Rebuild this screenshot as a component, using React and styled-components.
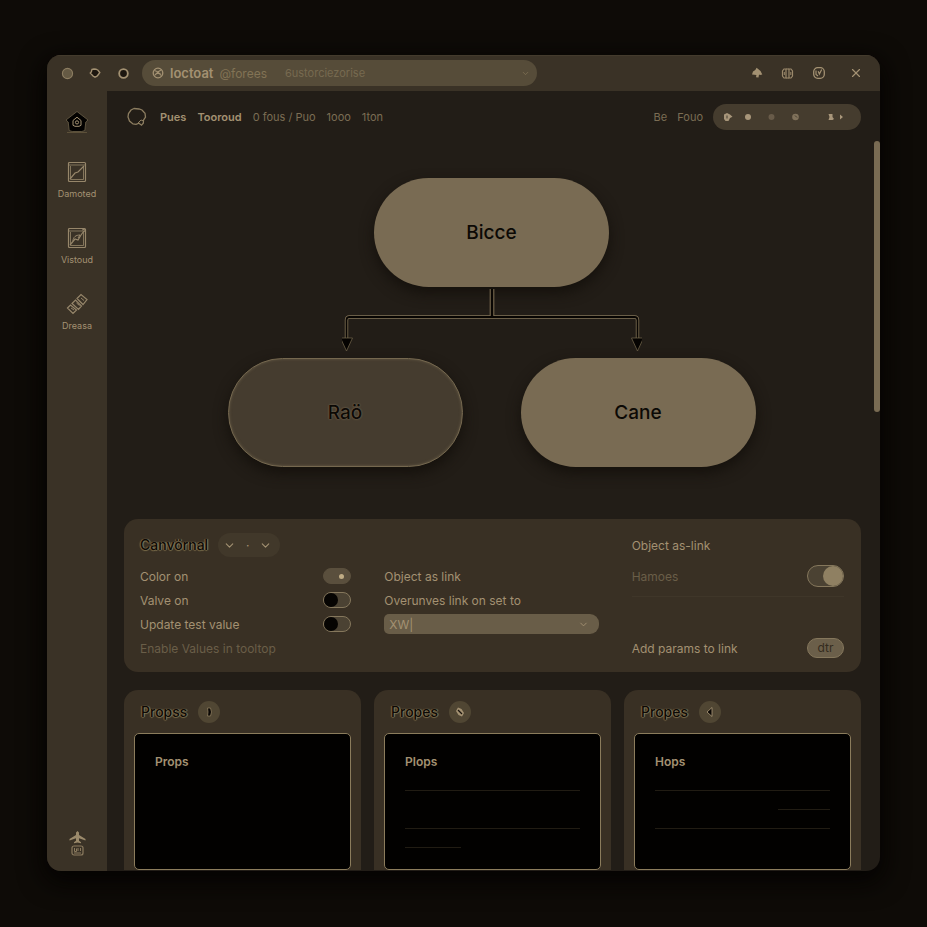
import { useState } from 'react'
import styled, { createGlobalStyle, css } from 'styled-components'
import { ChevronDown, X } from 'lucide-react'

const GlobalStyle = createGlobalStyle`
  * {
    box-sizing: border-box;
  }
  body {
    margin: 0;
    background: #0e0b07;
    color: #a39172;
    font-family: Inter, 'Liberation Sans', sans-serif;
    font-size: 12px;
  }
  button, input, select {
    font: inherit;
    color: inherit;
    margin: 0;
  }
  button {
    padding: 0;
    border: none;
    background: none;
  }
`

const Page = styled.div`
  display: flex;
  min-height: 100vh;
  padding: 55px 47px 56px;
`

const Window = styled.div`
  flex: 1;
  min-width: 0;
  display: flex;
  flex-direction: column;
  overflow: hidden;
  border-radius: 14px;
  background: #221d17;
  box-shadow: 0 8px 24px 4px #050302;
`

const TitleBar = styled.header`
  display: flex;
  align-items: center;
  height: 36px;
  padding: 0 9px 0 6px;
  background: #3a3226;
  box-shadow: inset 0 1px #443b2d;
`

const BarButton = styled.button`
  display: flex;
  align-items: center;
  justify-content: center;
  width: ${(props) => props.$width}px;
  height: 26px;
`

const AddressBar = styled.label`
  flex: 0 1 395px;
  display: flex;
  align-items: center;
  gap: 6px;
  height: 26px;
  margin-left: 5px;
  padding: 0 7px 0 10px;
  border-radius: 13px;
  background: #564c39;
`

const Site = styled.span`
  font-size: 13px;
  font-weight: 600;
  white-space: nowrap;
`

const SitePath = styled.span`
  color: #827355;
  font-size: 12px;
  white-space: nowrap;
`

const AddressInput = styled.input`
  flex: 1;
  min-width: 0;
  margin-left: 12px;
  padding: 0;
  border: none;
  outline: none;
  background: none;
  color: #766a50;
  font-size: 11px;
`

const BarActions = styled.div`
  display: flex;
  gap: 6px;
  margin-left: auto;
`

const ActionGroup = styled.div`
  display: flex;
`

const Body = styled.div`
  flex: 1;
  display: flex;
`

const Sidebar = styled.nav`
  flex: 0 0 60px;
  display: flex;
  flex-direction: column;
  align-items: center;
  gap: 27px;
  padding: 19px 0 15px;
  background: #3a3226;
`

const SideLink = styled.a`
  display: flex;
  flex-direction: column;
  align-items: center;
  gap: 5px;
  color: #a39172;
  font-size: 9px;
  line-height: 12px;
  text-decoration: none;
`

const SideFooter = styled.button`
  display: flex;
  flex-direction: column;
  align-items: center;
  margin-top: auto;
`

const Content = styled.main`
  flex: 1;
  min-width: 0;
  padding: 13px 13px 0 17px;
`

const ScrollTrack = styled.div`
  flex: 0 0 6px;
  padding-top: 50px;
`

const ScrollThumb = styled.div`
  height: 271px;
  border-radius: 3px;
  background: #796b53;
`

const TopNav = styled.nav`
  display: flex;
  align-items: center;
  gap: 10px;
  height: 26px;
  padding-left: 3px;
`

const NavLinks = styled.div`
  display: flex;
  gap: 11px;
  padding-left: 3px;
`

const NavLink = styled.a`
  color: ${(props) => (props.$strong ? '#a39172' : '#7b6d54')};
  font-size: 11px;
  font-weight: ${(props) => (props.$strong ? 600 : 400)};
  text-decoration: none;
  white-space: nowrap;
`

const NavEnd = styled.div`
  display: flex;
  align-items: center;
  gap: 10px;
  margin-left: auto;
`

const ToolPill = styled.button`
  width: 148px;
  height: 26px;
  border-radius: 13px;
  background: #453c2e;
`

const Diagram = styled.section`
  display: flex;
  flex-direction: column;
  align-items: center;
  margin: 48px 0 52px;
  padding-right: 2px;
`

const NodeRow = styled.div`
  display: flex;
  gap: 58px;
`

const Node = styled.button`
  width: 235px;
  height: 109px;
  border-radius: 55px;
  color: #0c0905;
  font-size: 19px;
  font-weight: 500;
  background: #796b53;
  box-shadow: 0 6px 14px #15110c;
  ${(props) =>
    props.$muted &&
    css`
      background: #453c2f;
      border: 1px solid #75684f;
      box-shadow: inset 0 0 3px #6b5f49, 0 6px 14px #15110c;
      text-shadow: 0 0 2px #8b7c60;
    `}
`

const Settings = styled.section`
  display: grid;
  grid-template-columns: 211fr 214fr 212fr;
  gap: 33px;
  padding: 14px 17px 13px 16px;
  border-radius: 14px;
  background: #393024;
`

const Column = styled.div`
  display: flex;
  flex-direction: column;
  min-width: 0;
`

const ColumnHead = styled.div`
  display: flex;
  align-items: center;
  gap: 10px;
  height: 24px;
  margin-bottom: 8px;
`

const Heading = styled.h2`
  margin: 0;
  color: #0d0905;
  font-size: 14px;
  font-weight: 500;
  line-height: 20px;
  text-shadow: 1px 0 1px #94845f, -1px 0 1px #766847, 0 1px 1px #766847;
`

const ChevronPill = styled.button`
  display: flex;
  align-items: center;
  justify-content: space-between;
  width: 62px;
  height: 24px;
  padding: 0 8px 0 5px;
  border-radius: 12px;
  background: #41382a;
`

const Rows = styled.div`
  display: grid;
  grid-auto-rows: 22px;
  row-gap: 2px;
`

const Row = styled.label`
  display: flex;
  align-items: center;
  justify-content: space-between;
  color: ${(props) => (props.$dim ? '#6a5e48' : '#a39172')};
  white-space: nowrap;
`

const LastRow = styled.div`
  display: flex;
  align-items: center;
  justify-content: space-between;
  height: 22px;
  margin-top: auto;
`

const Switch = styled.input`
  appearance: none;
  display: flex;
  align-items: center;
  width: ${(props) => (props.$large ? 37 : 28)}px;
  height: ${(props) => (props.$large ? 22 : 16)}px;
  border: 1px solid #85775c;
  border-radius: 11px;
  background: #4b4233;

  &::before {
    content: '';
    width: ${(props) => (props.$large ? 20 : 14)}px;
    height: ${(props) => (props.$large ? 20 : 14)}px;
    border-radius: 50%;
    background: #060402;
  }

  &:checked {
    justify-content: flex-end;
  }

  &:checked::before {
    background: #8f8062;
  }

  ${(props) =>
    props.$soft &&
    css`
      border-color: #5a4f3d;
      background: #5a4f3d;
      &:checked::before {
        width: 5px;
        height: 5px;
        margin-right: 6px;
        background: #c0ac85;
      }
    `}
`

const SelectBox = styled.div`
  display: grid;
  align-items: center;

  > * {
    grid-area: 1 / 1;
  }
  > svg {
    justify-self: end;
    margin-right: 10px;
    pointer-events: none;
  }
`

const Select = styled.select`
  appearance: none;
  width: 100%;
  height: 20px;
  padding: 0 5px;
  border: none;
  border-radius: 5px 9px 9px 5px;
  background: #695d48;
  color: #a39172;
`

const Tag = styled.button`
  width: 37px;
  height: 20px;
  border: 1px solid #85775c;
  border-radius: 10px;
  background: #6b5f4a;
  color: #342b1e;
  line-height: 16px;
`

const Divider = styled.hr`
  width: 100%;
  margin: 9px 0;
  border: none;
  border-top: 1px solid #3f3629;
`

const Cards = styled.section`
  display: grid;
  grid-template-columns: repeat(3, 1fr);
  gap: 13px;
  margin-top: 18px;
`

const Card = styled.article`
  padding: 11px 10px 0;
  border-radius: 14px 14px 0 0;
  background: #393024;
`

const CardHead = styled.div`
  display: flex;
  align-items: center;
  gap: 11px;
  height: 22px;
  margin-bottom: 10px;
  padding-left: 7px;
`

const RoundButton = styled.button`
  display: flex;
  align-items: center;
  justify-content: center;
  width: 22px;
  height: 22px;
  border-radius: 50%;
  background: #504633;
`

const Preview = styled.div`
  height: 137px;
  padding: 18px 20px;
  border: 1px solid #8b7c5c;
  border-radius: 5px;
  background: #020100;
`

const PreviewTitle = styled.h3`
  margin: 0 0 18px;
  font-size: 12px;
  font-weight: 600;
  line-height: 20px;
`

const Lines = styled.div`
  display: grid;
  row-gap: 18px;
`

const Line = styled.div`
  height: 1px;
  width: ${(props) => props.$width};
  justify-self: ${(props) => props.$align || 'start'};
  background: ${(props) => (props.$hidden ? 'transparent' : '#211c13')};
`

const RingIcon = ({ size, filled, width = 1 }) => (
  <svg width={size} height={size} viewBox="0 0 12 12">
    <circle
      cx="6"
      cy="6"
      r="4.7"
      fill={filled ? '#655a44' : '#1d1710'}
      stroke={filled ? '#8c7d61' : '#a39172'}
      strokeWidth={width}
    />
  </svg>
)

const NotchIcon = () => (
  <svg width="12" height="12" viewBox="0 0 12 12">
    <path
      d="M3 2.4 5 2l2 .2 2 1 1.8 2.3-1.6 2.3L8 9.2l-2 1-2-1.2-1.2-1.4L1.3 6l1-1z"
      fill="#1d1710"
      stroke="#a39172"
      strokeWidth="1.4"
    />
  </svg>
)

const GlobeIcon = () => (
  <svg width="12" height="12" viewBox="0 0 12 12" fill="none" stroke="#a39172">
    <circle cx="6" cy="6" r="4.8" strokeWidth="1.3" />
    <path d="M2.5 3.5 6 5l3-2M3 8l3-3 3 3.4M4 6.5h4.5" strokeWidth="1.1" />
  </svg>
)

const BellIcon = () => (
  <svg width="12" height="12" viewBox="0 0 12 12" fill="#a39172">
    <path d="M5.6.8 9.5 4l1.8 3.5L9 8 8 7.500 7.500 10.500 5 10.200l.4-2.200L1 7.600l1-3L4.300 3z" />
  </svg>
)

const PanesIcon = () => (
  <svg width="13" height="13" viewBox="0 0 13 13" fill="none" stroke="#9b896b">
    <path d="M5 2H3L1.5 4v5L3 11h2zM8 2h2l1.5 2v5L10 11H8z" strokeWidth="1.2" />
    <path d="M5 2h3M5 11h3M3.3 5v3M9.8 5v3" />
  </svg>
)

const DialIcon = () => (
  <svg width="14" height="14" viewBox="0 0 14 14" fill="none" stroke="#a39172">
    <rect x="1.7" y="1.7" width="10.6" height="10.6" rx="4" strokeWidth="1.3" />
    <path d="M4 4.5v4L6 10M6.2 5.2 7.4 8l2.3-4.5" strokeWidth="1.2" />
  </svg>
)

const HomeIcon = () => (
  <svg width="24" height="24" viewBox="0 0 24 24">
    <path
      d="M12 1.5 23 10l-2.2 2-1 8.5-3 1H7.2l-3-1-1-8.500L1 10z"
      fill="#030201"
      stroke="#6b5f47"
      strokeWidth=".8"
    />
    <path d="M2 22.5h20" stroke="#5c5039" />
    <g fill="none" stroke="#a39172">
      <path d="m8 10.5 4-3.3 4 3.3v4.8l-2 1h-4l-2-1z" />
      <circle cx="12" cy="12.4" r="1.6" />
    </g>
  </svg>
)

const FrameIcon = ({ busy }) => (
  <svg width="22" height="22" viewBox="0 0 22 22" fill="none" stroke="#96866a">
    <rect x="2.5" y="1.5" width="17" height="19" rx="1" strokeWidth="1.2" />
    <path d="M3 4h16M4.5 5v13.5h13V5" strokeWidth=".8" />
    <path d={busy ? 'm4 18 5-6 3 1 3-5 3-4' : 'm4 18 5-6 3-1 6-6'} strokeWidth="1.2" />
    {busy && <path d="M7 14c0-4 3-6 7-6l-2 3M16 3l3-1v3" />}
  </svg>
)

const TagsIcon = () => (
  <svg width="22" height="22" viewBox="0 0 22 22" fill="none" stroke="#96866a" strokeWidth="1.2">
    <path d="m1.5 15 3-3 6 5-3.5 3.5zM6 10.5 9.5 7l6 6-3 3.5zM11 5.5l4-4 6 5-4 5z" />
    <path d="m5 15 3 2M10.5 10l3 2.5M15 5l3 2.5" strokeWidth="1" />
  </svg>
)

const PlaneIcon = () => (
  <svg width="17" height="13" viewBox="0 0 17 13" fill="#9b8a6b">
    <path d="M8.5 0 10 1.500V4l6.500 4v1.400L10 7.300v2.500l2 1.500v1l-3.500-.8-3.500.8v-1l2-1.500V7.300L.5 9.400V8L7 4V1.500z" />
  </svg>
)

const BoxIcon = () => (
  <svg width="13" height="12" viewBox="0 0 13 12" fill="none" stroke="#8b7b5f">
    <rect x="1" y="2" width="11" height="9" rx="2" strokeWidth="1.2" />
    <path d="M3.5 4v3.5h2V4.5M7 4v3M9.5 4v3M3 9h7" />
  </svg>
)

const LogoIcon = () => (
  <svg width="20" height="20" viewBox="0 0 20 20" fill="none" stroke="#8c7d60">
    <path
      d="M7 1.500 4 3 1.500 6.500 1 10l1.500 4L6 17l3 .4 3-1.200 2.500 2 1.800-2 .2-3 2-3-.5-4L15 3l-3-1z"
      strokeWidth="1.3"
    />
    <path d="m11 16 3-3 3 1" />
  </svg>
)

const ToolGlyphs = () => (
  <svg width="148" height="26" viewBox="0 0 148 26">
    <g fill="#a8967a">
      <path d="M11 10.500 14 9l3 1.500 2.500 2.300-2.500 1.200L15.500 17H12.500L11 15z" />
      <circle cx="35" cy="13" r="3" />
      <circle cx="58.5" cy="13" r="3" opacity=".35" />
      <circle cx="82.5" cy="13" r="3.3" opacity=".6" />
      <path d="M115.500 10h4v3l1.500 2-1.500 1h-4l1-3zM127 10.500l3 2.500-3 2.500z" />
    </g>
    <path d="M14 11.500v3M82 11.500l2 2" stroke="#453c2e" />
  </svg>
)

const Connector = () => (
  <svg width="300" height="71" viewBox="0 0 300 71" fill="none">
    <path d="M4.500 53V33q0-3 3-3h285q3 0 3 3v20" stroke="#837458" strokeWidth="3.4" />
    <path d="M150 2v28" stroke="#837458" strokeWidth="4.6" />
    <path d="M4.500 53V33q0-3 3-3h285q3 0 3 3v20" stroke="#080502" strokeWidth="1.8" />
    <path d="M150 2v28" stroke="#080502" strokeWidth="2.6" />
    <path
      d="M-1.500 51h12l-6 13zM289.500 51h12l-6 13z"
      fill="#050301"
      stroke="#776a4f"
      strokeWidth=".7"
    />
  </svg>
)

const Glyph = ({ kind }) => (
  <svg width="12" height="12" viewBox="0 0 12 12">
    {kind === 'dot' && (
      <path d="M4.500 2h3l1 4-1 4h-3l.5-4z" fill="#0a0704" stroke="#8b7b5d" strokeWidth=".8" />
    )}
    {kind === 'spin' && (
      <>
        <path d="M4 1.500 2 5l2.500 4 3.500 1.500L10 7 7.500 3z" fill="#a39172" />
        <path d="m4 4 4 4" stroke="#1a140c" strokeWidth="1.2" />
      </>
    )}
    {kind === 'back' && (
      <path d="M8 1.500v9L3 6z" fill="#0a0704" stroke="#a39172" strokeWidth=".9" />
    )}
  </svg>
)

const navLinks = [
  { text: 'Pues', strong: true },
  { text: 'Tooroud', strong: true },
  { text: '0 fous / Puo' },
  { text: '1ooo' },
  { text: '1ton' },
]

const sideLinks = [
  { text: 'Damoted', icon: <FrameIcon /> },
  { text: 'Vistoud', icon: <FrameIcon busy /> },
  { text: 'Dreasa', icon: <TagsIcon /> },
]

const cards = [
  { heading: 'Propss', title: 'Props', glyph: 'dot', lines: [] },
  {
    heading: 'Propes',
    title: 'Plops',
    glyph: 'spin',
    lines: [
      { width: '100%' },
      { width: '100%', hidden: true },
      { width: '100%' },
      { width: '32%' },
    ],
  },
  {
    heading: 'Propes',
    title: 'Hops',
    glyph: 'back',
    lines: [
      { width: '100%' },
      { width: '30%', align: 'end' },
      { width: '100%' },
    ],
  },
]

const PropsCard = ({ card }) => (
  <Card>
    <CardHead>
      <Heading>{card.heading}</Heading>
      <RoundButton aria-label={card.heading}>
        <Glyph kind={card.glyph} />
      </RoundButton>
    </CardHead>
    <Preview>
      <PreviewTitle>{card.title}</PreviewTitle>
      <Lines>
        {card.lines.map((line, i) => (
          <Line key={i} $width={line.width} $align={line.align} $hidden={line.hidden} />
        ))}
      </Lines>
    </Preview>
  </Card>
)

const SwitchRow = ({ label, initial = false, large, soft, dim }) => {
  const [on, setOn] = useState(initial)
  return (
    <Row $dim={dim}>
      {label}
      <Switch
        type="checkbox"
        checked={on}
        onChange={() => setOn(!on)}
        $large={large}
        $soft={soft}
      />
    </Row>
  )
}

export default function App() {
  const [address, setAddress] = useState('6ustorciezorise')

  return (
    <Page>
      <GlobalStyle />
      <Window>
        <TitleBar>
          <BarButton $width={28} aria-label="Close window">
            <RingIcon size={13} filled />
          </BarButton>
          <BarButton $width={28} aria-label="Minimise">
            <NotchIcon />
          </BarButton>
          <BarButton $width={28} aria-label="Maximise">
            <RingIcon size={11} width={2} />
          </BarButton>
          <AddressBar>
            <GlobeIcon />
            <Site>loctoat</Site>
            <SitePath>@forees</SitePath>
            <AddressInput
              aria-label="Address"
              value={address}
              onChange={(e) => setAddress(e.target.value)}
            />
            <ChevronDown size={9} color="#827355" />
          </AddressBar>
          <BarActions>
            <ActionGroup>
              <BarButton $width={31} aria-label="Alerts"><BellIcon /></BarButton>
              <BarButton $width={31} aria-label="Panes"><PanesIcon /></BarButton>
              <BarButton $width={31} aria-label="Account"><DialIcon /></BarButton>
            </ActionGroup>
            <BarButton $width={31} aria-label="Close"><X size={14} /></BarButton>
          </BarActions>
        </TitleBar>
        <Body>
          <Sidebar>
            <SideLink href="#home" aria-label="Home"><HomeIcon /></SideLink>
            {sideLinks.map(({ text, icon }) => (
              <SideLink key={text} href={`#${text}`}>
                {icon}
                {text}
              </SideLink>
            ))}
            <SideFooter aria-label="Travel">
              <PlaneIcon />
              <BoxIcon />
            </SideFooter>
          </Sidebar>
          <Content>
            <TopNav>
              <LogoIcon />
              <NavLinks>
                {navLinks.map(({ text, strong }) => (
                  <NavLink key={text} href={`#${text}`} $strong={strong}>{text}</NavLink>
                ))}
              </NavLinks>
              <NavEnd>
                <NavLink href="#be">Be</NavLink>
                <NavLink href="#fouo">Fouo</NavLink>
                <ToolPill aria-label="Tools"><ToolGlyphs /></ToolPill>
              </NavEnd>
            </TopNav>
            <Diagram>
              <Node>Bicce</Node>
              <Connector />
              <NodeRow>
                <Node $muted>Raö</Node>
                <Node>Cane</Node>
              </NodeRow>
            </Diagram>
            <Settings>
              <Column>
                <ColumnHead>
                  <Heading>Canvörnal</Heading>
                  <ChevronPill aria-label="Choose">
                    <ChevronDown size={13} />
                    ·
                    <ChevronDown size={13} />
                  </ChevronPill>
                </ColumnHead>
                <Rows>
                  <SwitchRow label="Color on" initial soft />
                  <SwitchRow label="Valve on" />
                  <SwitchRow label="Update test value" />
                  <Row as="div" $dim>Enable Values in tooltop</Row>
                </Rows>
              </Column>
              <Column>
                <ColumnHead />
                <Rows>
                  <Row as="div">Object as link</Row>
                  <Row htmlFor="link-set">Overunves link on set to</Row>
                  <SelectBox>
                    <Select id="link-set">
                      <option>XW|</option>
                    </Select>
                    <ChevronDown size={11} />
                  </SelectBox>
                </Rows>
              </Column>
              <Column>
                <ColumnHead>Object as-link</ColumnHead>
                <SwitchRow label="Hamoes" initial large dim />
                <Divider />
                <LastRow>
                  Add params to link
                  <Tag>dtr</Tag>
                </LastRow>
              </Column>
            </Settings>
            <Cards>
              {cards.map((card) => (
                <PropsCard key={card.title} card={card} />
              ))}
            </Cards>
          </Content>
          <ScrollTrack>
            <ScrollThumb />
          </ScrollTrack>
        </Body>
      </Window>
    </Page>
  )
}
